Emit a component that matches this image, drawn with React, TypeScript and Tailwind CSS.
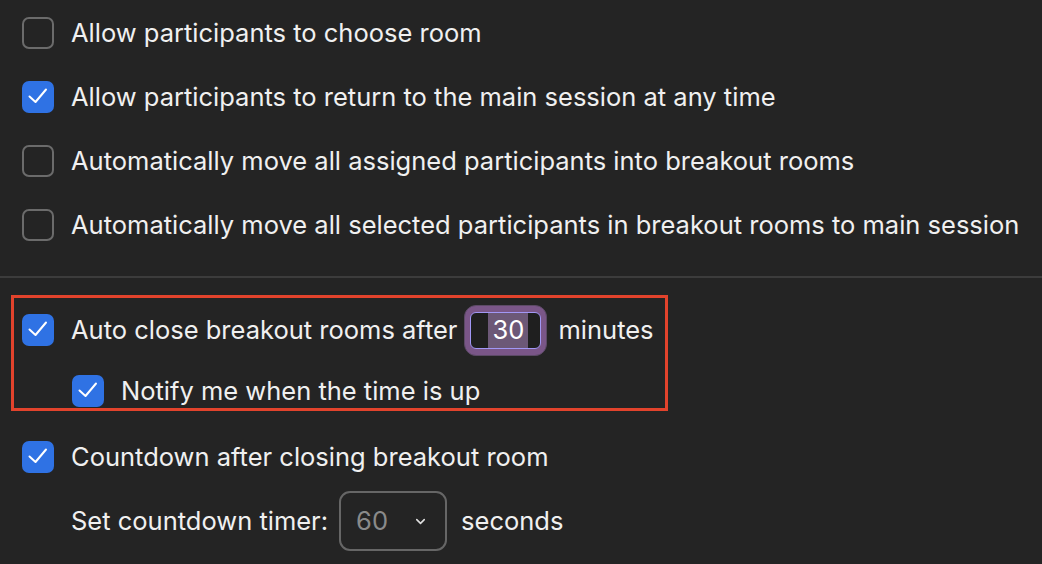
import { ChevronDown } from 'lucide-react';

type BoxProps = { checked?: boolean };

const Box = ({ checked }: BoxProps) =>
  checked ? (
    <span className="flex h-[32px] w-[32px] flex-shrink-0 items-center justify-center rounded-[7px] bg-[#2f72e4]">
      <svg width="32" height="32" viewBox="0 0 32 32" fill="none">
        <path d="M7.5 15.5 L13.5 21 L24 8.5" stroke="#fff" strokeWidth="2" strokeLinecap="round" strokeLinejoin="round" />
      </svg>
    </span>
  ) : (
    <span className="h-[32px] w-[32px] flex-shrink-0 rounded-[7px] border-2 border-[#6b6b6b]" />
  );

const Row = ({ checked, label }: { checked?: boolean; label: string }) => (
  <div className="flex h-16 items-center gap-[17px]">
    <Box checked={checked} />
    <span>{label}</span>
  </div>
);

export default function App() {
  return (
    <div
      className="h-[564px] w-[1042px] overflow-hidden bg-[#242424] pt-px text-[25.5px] leading-none text-[#f0f0f0]"
      style={{ fontFamily: 'Inter, "Liberation Sans", sans-serif' }}
    >
      <div className="px-[22px]">
        <Row label="Allow participants to choose room" />
        <Row checked label="Allow participants to return to the main session at any time" />
        <Row label="Automatically move all assigned participants into breakout rooms" />
        <Row label="Automatically move all selected participants in breakout rooms to main session" />
      </div>

      <div className="mt-[19px] h-[2px] w-full bg-[#3c3c3c]" />

      <div className="px-[11px] pt-[17px]">
        <div className="w-[657px] border-[3px] border-[#e2432c] pl-[8px]">
          <div className="flex h-[64px] items-center gap-[17px]">
            <Box checked />
            <span>Auto close breakout rooms after</span>
            <div className="-ml-[10px] flex h-[51px] w-[83px] items-center rounded-[12px] border border-[#5c4a66] bg-[#7a5688] px-[5px] py-[6px]">
              <div className="flex h-full w-full items-stretch rounded-[6px] border border-[#a197f5] bg-[#1f1f1f] pl-[17px]">
                <span className="flex items-center bg-[#6c5877] px-[4px] text-[#ffffff]">30</span>
              </div>
            </div>
            <span className="-ml-[6px]">minutes</span>
          </div>
          <div className="mb-px mt-[13px] flex h-[32px] items-center gap-[17px] pl-[50px]">
            <Box checked />
            <span>Notify me when the time is up</span>
          </div>
        </div>
      </div>

      <div className="px-[22px] pt-[14px]">
        <Row checked label="Countdown after closing breakout room" />
        <div className="flex h-16 items-center pl-[49px]">
          <span>Set countdown timer:</span>
          <div className="ml-[11px] flex h-[60px] w-[108px] items-center justify-between rounded-[11px] border-2 border-[#666666] pl-[15px] pr-[17px]">
            <span className="text-[#8a8a8a]">60</span>
            <ChevronDown size={15} strokeWidth={2.5} className="text-[#e0e0e0]" />
          </div>
          <span className="ml-[14px]">seconds</span>
        </div>
      </div>
    </div>
  );
}
